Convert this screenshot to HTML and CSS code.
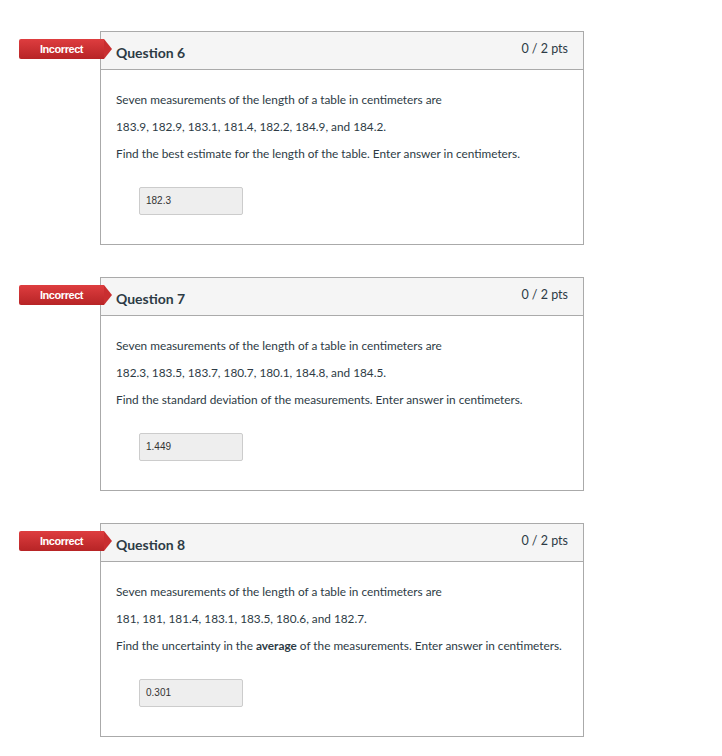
FILE: index.html
```html
<!DOCTYPE html>
<html>
    <head>
      <meta charset="utf-8">
      <title>Quiz results</title>
      <link rel="stylesheet" href="styles.css">
    </head>
    <body>
        <div class="quiz">
            <div class="question">
                <div class="badge">Incorrect</div>
                <div class="header">
                    <span class="title">Question 6</span>
                    <span class="pts">0 / 2 pts</span>
                </div>
                <div class="body">
                    <p>Seven measurements of the length of a table in centimeters are</p>
                    <p>183.9, 182.9, 183.1, 181.4, 182.2, 184.9, and 184.2.</p>
                    <p>Find the best estimate for the length of the table. Enter answer in centimeters.</p>
                    <div class="answer">182.3</div>
                </div>
            </div>
            <div class="question">
                <div class="badge">Incorrect</div>
                <div class="header">
                    <span class="title">Question 7</span>
                    <span class="pts">0 / 2 pts</span>
                </div>
                <div class="body">
                    <p>Seven measurements of the length of a table in centimeters are</p>
                    <p>182.3, 183.5, 183.7, 180.7, 180.1, 184.8, and 184.5.</p>
                    <p>Find the standard deviation of the measurements. Enter answer in centimeters.</p>
                    <div class="answer">1.449</div>
                </div>
            </div>
            <div class="question">
                <div class="badge">Incorrect</div>
                <div class="header">
                    <span class="title">Question 8</span>
                    <span class="pts">0 / 2 pts</span>
                </div>
                <div class="body">
                    <p>Seven measurements of the length of a table in centimeters are</p>
                    <p>181, 181, 181.4, 183.1, 183.5, 180.6, and 182.7.</p>
                    <p>Find the uncertainty in the <strong>average</strong> of the measurements. Enter answer in centimeters.</p>
                    <div class="answer">0.301</div>
                </div>
            </div>
        </div>
    </body>
</html>
```

FILE: styles.css
```css
body{
    margin: 0;
    background: #fff;
    font-family: Lato, "Open Sans", sans-serif;
    color: #2d3b45;
}
.quiz{
    padding: 31px 0 0 100px;
}
.question{
    position: relative;
    width: 482px;
    border: 1px solid #aaa;
    margin-bottom: 32px;
}
/* red ribbon sticking out on the left */
.badge{
    position: absolute;
    left: -82px;
    top: 7px;
    width: 85px;
    height: 20px;
    line-height: 20px;
    background: linear-gradient(#de3d3f, #b72426);
    color: #fff;
    font-family: "Liberation Sans", Arial, sans-serif;
    font-weight: bold;
    font-size: 11px;
    letter-spacing: -0.45px;
    text-align: center;
    border-radius: 2px 0 0 2px;
}
.badge::after{
    content: '';
    position: absolute;
    right: -8px;
    top: 0;
    border-left: 8px solid #c92e30;
    border-top: 10px solid transparent;
    border-bottom: 10px solid transparent;
}
.header{
    display: flex;
    justify-content: space-between;
    height: 37px;
    padding: 0 15px;
    background: #f5f5f5;
    border-bottom: 1px solid #aaa;
}
.title{
    font-size: 14px;
    font-weight: bold;
    padding-top: 12px;
}
.pts{
    font-size: 12.5px;
    padding-top: 9px;
}
.body{
    padding: 16px 15px 29px;
    font-size: 11.8px;
}
.body p{
    margin: 0;
    line-height: 27px;
}
.answer{
    margin: 20px 0 0 23px;
    width: 92px;
    height: 26px;
    line-height: 26px;
    padding: 0 4px 0 6px;
    background: #eee;
    border: 1px solid #ccc;
    border-radius: 2px;
    font-family: "Liberation Sans", Arial, sans-serif;
    font-size: 10px;
    color: #333;
}
```
